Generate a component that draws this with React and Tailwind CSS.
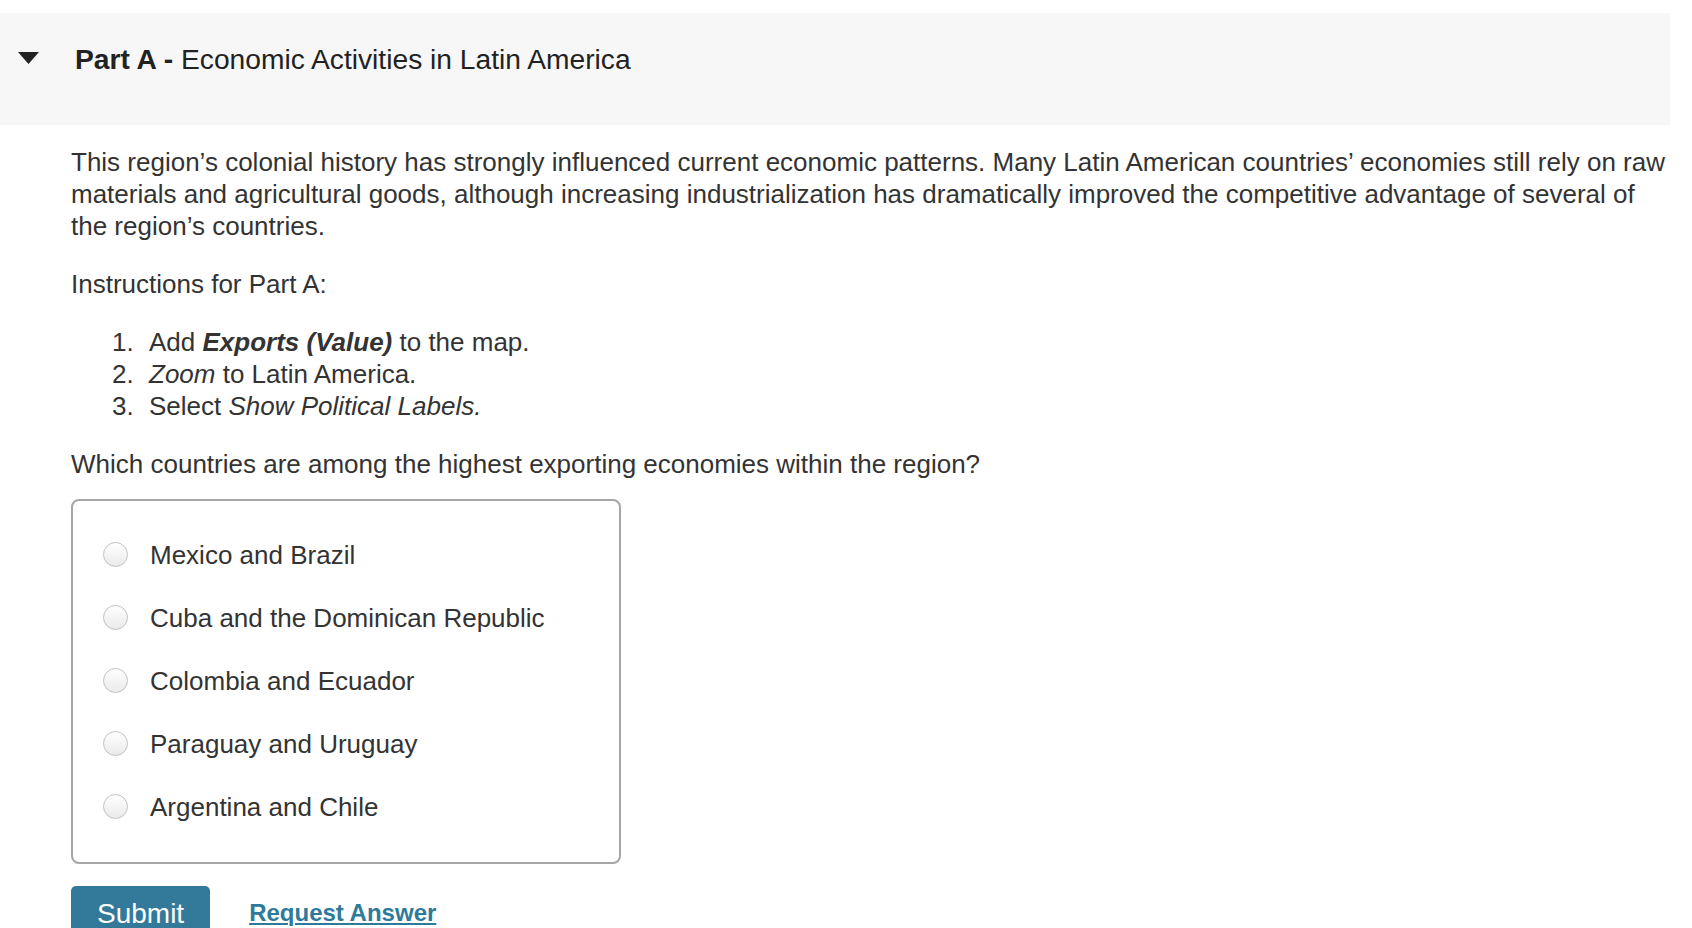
export default function App() {
	const options = [
		"Mexico and Brazil",
		"Cuba and the Dominican Republic",
		"Colombia and Ecuador",
		"Paraguay and Uruguay",
		"Argentina and Chile",
	];

	return (
		<div className="min-h-screen w-full bg-white text-[#333] font-['Liberation_Sans',Arial,sans-serif]">
			<div className="w-[1670px] pt-[13px]">
				{/* part header */}
				<div className="flex h-[112px] items-start bg-[#f7f7f7]">
					<svg className="ml-[18px] mt-[39px] shrink-0" width="21" height="12" viewBox="0 0 21 12">
						<path d="M0 0 H21 L10.5 12 Z" fill="#222" />
					</svg>
					<h2 className="ml-[36px] mt-[28px] text-[28.2px] leading-[36px] text-[#222]">
						<span className="font-bold">Part A - </span>Economic Activities in Latin America
					</h2>
				</div>

				<div className="pl-[71px] text-[26px] leading-[32px]">
					<p className="mt-[21px]">
						This region’s colonial history has strongly influenced current economic patterns. Many Latin American countries’ economies still rely on raw materials and agricultural goods, although increasing industrialization has dramatically improved the competitive advantage of several of the region’s countries.
					</p>

					<p className="mt-[26px]">Instructions for Part A:</p>

					<ol className="mt-[26px] pl-[41px]">
						<li className="flex">
							<span className="w-[37px] shrink-0">1.</span>
							<span>
								Add <b className="italic">Exports (Value)</b> to the map.
							</span>
						</li>
						<li className="flex">
							<span className="w-[37px] shrink-0">2.</span>
							<span>
								<i>Zoom</i> to Latin America.
							</span>
						</li>
						<li className="flex">
							<span className="w-[37px] shrink-0">3.</span>
							<span>
								Select <i>Show Political Labels.</i>
							</span>
						</li>
					</ol>

					<p className="mt-[26px]">Which countries are among the highest exporting economies within the region?</p>

					{/* answer choices */}
					<div className="mt-[19px] w-[550px] rounded-[8px] border-2 border-[#a6a6a6] pt-[22px] pb-[24px]">
						{options.map((opt) => (
							<label key={opt} className="flex h-[63px] items-center">
								<span className="ml-[30px] h-[25px] w-[25px] shrink-0 rounded-full border border-[#c2c2c2] bg-linear-to-b from-white to-[#eaeaea]" />
								<span className="ml-[22px]">{opt}</span>
							</label>
						))}
					</div>

					<div className="mt-[22px] flex items-start">
						<button
							type="button"
							className="h-[52px] rounded-[5px] bg-[#33799a] px-[26px] pt-[4px] text-[28px] leading-[40px] text-white"
						>
							Submit
						</button>
						<a href="#" className="ml-[39px] mt-[13px] text-[24px] font-bold leading-[28px] text-[#2e7a9b] underline decoration-2 underline-offset-[2px]">
							Request Answer
						</a>
					</div>
				</div>
			</div>
		</div>
	);
}
